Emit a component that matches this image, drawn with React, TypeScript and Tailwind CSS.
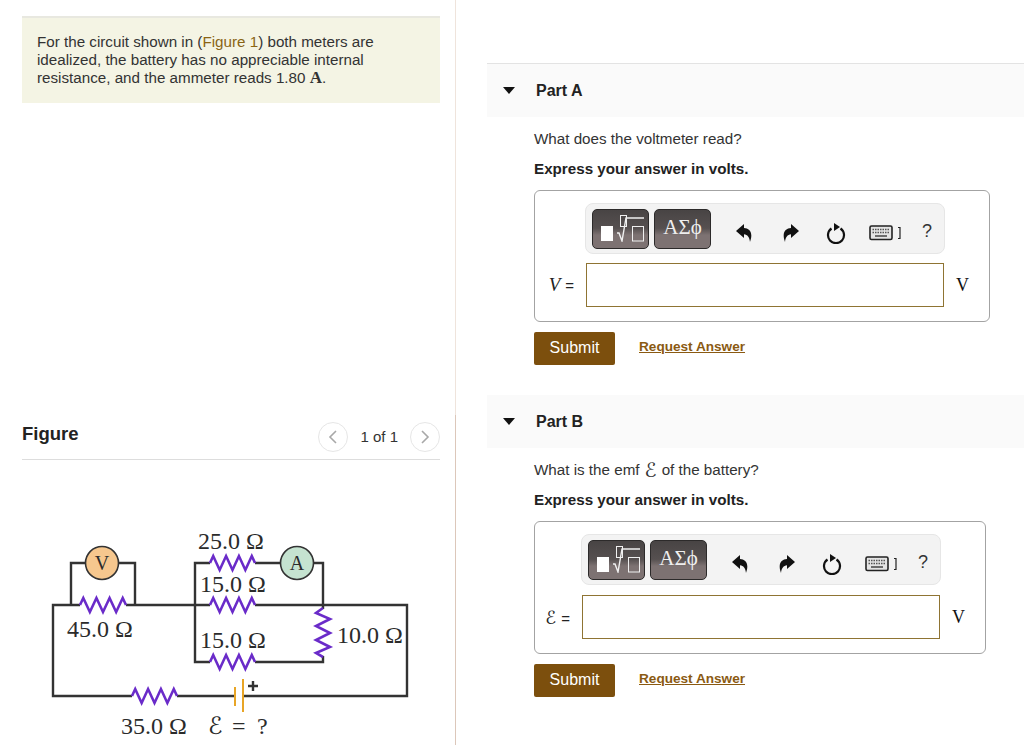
import React from "react";

const sans = "font-['Liberation_Sans',Arial,sans-serif]";
const serif = "font-['Liberation_Serif','Times_New_Roman',serif]";
const script = "font-['DejaVu_Sans',serif]";

// zig-zag between two points along the x axis
function zig(x: number, y: number, w: number) {
  const n = 7;
  const step = w / n;
  let d = `M${x} ${y}`;
  for (let i = 0; i < n; i++) {
    const up = i % 2 === 0 ? -7 : 7;
    d += ` L${x + step * (i + 0.5)} ${y + up}`;
  }
  return d + ` L${x + w} ${y}`;
}

function Circuit() {
  const wire = "#333333";
  const res = "#6a2bc9";
  return (
    <svg width="456" height="235" viewBox="0 510 456 235" className="block">
      <g fill="none" stroke={wire} strokeWidth="2.4">
        <path d="M80 606H53V697H132M177 697H235M243 697H407V606H255M210 606H126" />
        <path d="M71 606V564H85M119 564H135V606" />
        <path d="M210 564H195V663H210M255 663H323V657M323 610V564H314M280 564H255" />
      </g>
      <g fill="none" stroke={res} strokeWidth="2.6">
        <path d={zig(80, 606, 46)} />
        <path d={zig(210, 564, 45)} />
        <path d={zig(210, 606, 45)} />
        <path d={zig(210, 663, 45)} />
        <path d={zig(132, 697, 45)} />
        <path d="M323 609L316 614L330 620L316 627L330 634L316 641L330 648L316 654L323 658" />
      </g>
      <circle cx="102" cy="564" r="16.5" fill="#f6c78e" stroke={wire} strokeWidth="1.6" />
      <circle cx="297" cy="564" r="16.5" fill="#c5e3d0" stroke={wire} strokeWidth="1.6" />
      <g stroke="#e8a526" strokeWidth="2">
        <path d="M235 688V707" />
        <path d="M243 680V713" />
      </g>
      <path d="M253 682V692M248 687H258" stroke={wire} strokeWidth="2.4" />
      <g className={serif} fill="#2b2b2b" fontSize="24">
        <text x="102" y="571" fontSize="20" textAnchor="middle">V</text>
        <text x="297" y="571" fontSize="20" textAnchor="middle">A</text>
        <text x="198" y="550">25.0 Ω</text>
        <text x="200" y="593">15.0 Ω</text>
        <text x="67" y="638">45.0 Ω</text>
        <text x="200" y="649">15.0 Ω</text>
        <text x="337" y="644">10.0 Ω</text>
        <text x="121" y="735">35.0 Ω</text>
        <text x="208" y="735" className={script} fontSize="24" fontStyle="italic">ℰ</text>
        <text x="232" y="735">=</text>
        <text x="257" y="735">?</text>
      </g>
    </svg>
  );
}

function UndoIcon({ flip }: { flip?: boolean }) {
  return (
    <svg width="17" height="18" viewBox="0 0 17 18" className={flip ? "-scale-x-100" : ""}>
      <path d="M0 7L8 0V4C13.5 4.2 17.5 8.5 14 18C13.5 13 11.5 10.5 8 10.2V14Z" fill="#111111" />
    </svg>
  );
}

function KeyboardIcon() {
  return (
    <svg width="33" height="16" viewBox="0 0 33 16">
      <rect x="1" y="1" width="22" height="13.5" rx="1.5" fill="#e4e4e4" stroke="#222222" strokeWidth="1.6" />
      <path d="M3.5 4.5H20.5M3.5 7.5H20.5" stroke="#555555" strokeWidth="1.5" strokeDasharray="1.5 1" />
      <path d="M6 11H18" stroke="#444444" strokeWidth="1.5" />
      <path d="M29 2.5H31V13.5H29" fill="none" stroke="#222222" strokeWidth="1.2" />
    </svg>
  );
}

const btn =
  "flex h-10 w-[57px] rounded-[5px] border border-[#2c2a2a] bg-[linear-gradient(#484444_0%,#565050_48%,#7d7272_66%,#7d7272_100%)]";

function Toolbar() {
  return (
    <div className="flex h-[51px] w-[360px] items-center rounded-lg border border-[#e6e6e6] bg-[#f3f3f3] pl-[6px]">
      <div className={`${btn} items-center gap-[4px] pl-[8px]`}>
        <span className="mt-[9px] h-[15px] w-[12px] bg-white" />
        <svg width="28" height="28" viewBox="0 0 28 28" className="-mt-[2px] shrink-0">
          <path d="M0 19H2L5 27L9 4H27" fill="none" stroke="#f0f0f0" strokeWidth="1.4" />
          <rect x="3.5" y="1.5" width="6" height="11" fill="none" stroke="#f0f0f0" />
          <rect x="15.5" y="12.5" width="11" height="14.5" fill="none" stroke="#f0f0f0" />
        </svg>
      </div>
      <div className={`${btn} ml-[5px] items-start justify-center pt-[7px] ${serif} text-[21px] leading-5 text-[#eeeeee]`}>
        ΑΣϕ
      </div>
      <div className="ml-[25px] mt-2 flex items-center">
        <UndoIcon />
        <div className="ml-[29px]"><UndoIcon flip /></div>
        <svg width="20" height="22" viewBox="0 0 20 22" className="ml-[27px]">
          <path d="M14.5 6.5A8 8 0 1 1 5.5 6.5" fill="none" stroke="#111111" strokeWidth="2.2" />
          <path d="M8 1L14 5L8 9Z" fill="#111111" />
        </svg>
        <div className="ml-[23px]"><KeyboardIcon /></div>
        <span className={`ml-[20px] ${sans} -mt-[3px] text-[18px] leading-5 text-[#333333]`}>?</span>
      </div>
    </div>
  );
}

type PartProps = {
  title: string;
  question: React.ReactNode;
  symbol: React.ReactNode;
  headerClass: string;
  boxClass: string;
  inputGap: string;
  indent: string;
  mt: string;
};

function Part({ title, question, symbol, headerClass, boxClass, inputGap, indent, mt }: PartProps) {
  return (
    <section className={mt}>
      <div className={`flex items-center bg-[#fafafa] ${headerClass}`}>
        <span className="ml-[16px] h-0 w-0 border-x-[6px] border-t-[7px] border-x-transparent border-t-[#111111]" />
        <span className="ml-[21px] text-[16px] font-bold text-[#222222]">{title}</span>
      </div>
      <div className="pl-[47px]">
        <p className="mt-[13px] flex h-[18px] items-center text-[15.2px] text-[#333333]">{question}</p>
        <p className="mt-[12px] h-[18px] text-[15.2px] leading-[18px] font-bold text-[#222222]">Express your answer in volts.</p>
        <div className={`mt-[12px] rounded-md border border-[#a3a3a3] ${boxClass}`}>
          <div className={`pt-[12px] ${indent}`}>
            <Toolbar />
            <div className={`-ml-[50px] flex h-[44px] items-center ${inputGap}`}>
              <span className={`flex w-[51px] items-baseline justify-end pr-[12px] ${serif} text-[19px] text-[#222222]`}>
                {symbol}
                <span className={`ml-[5px] ${sans} text-[15px]`}>=</span>
              </span>
              <div className="h-[44px] w-[358px] border border-[#8f7433]" />
              <span className={`ml-[12px] ${serif} text-[18px] text-[#111111]`}>V</span>
            </div>
          </div>
        </div>
        <div className="mt-[10px] flex items-center">
          <button className="h-[33px] w-[81px] rounded-[2px] bg-[#7c4f0d] pb-[2px] text-[16px] text-white">Submit</button>
          <a className="ml-[24px] -mt-[2px] text-[13.6px] font-bold text-[#8a5a12] underline">Request Answer</a>
        </div>
      </div>
    </section>
  );
}

export default function App() {
  return (
    <div className={`flex h-[745px] w-[1024px] overflow-hidden bg-white ${sans} text-[#333333]`}>
      <div className="h-full w-[456px] shrink-0 border-r [border-image:linear-gradient(#efe4dc_415px,#dcc7ba_415px)_1] pl-[22px]">
        <div className="mt-[16px] h-[87px] w-[418px] border-t-2 border-[#e8e8e0] bg-[#f4f4e4] pl-[15px] pt-[15px] text-[15.2px] leading-[18px]">
          <p>
            For the circuit shown in (<span className="text-[#8a6414]">Figure 1</span>) both meters are
            <br />
            idealized, the battery has no appreciable internal
            <br />
            resistance, and the ammeter reads 1.80 <b className={`${serif} text-[17px]`}>A</b>.
          </p>
        </div>
        <div className="mt-[319px] flex h-[38px] w-[418px] items-start justify-between border-b border-[#dddddd]">
          <h2 className="text-[18.5px] font-bold leading-6 text-[#222222]">Figure</h2>
          <div className="flex items-center gap-[12px] text-[15px]">
            <span className="flex size-[30px] items-center justify-center rounded-full border border-[#e6e6e6]">
              <svg width="10" height="14" viewBox="0 0 10 14"><path d="M8 1L2 7L8 13" fill="none" stroke="#a8a8a8" strokeWidth="1.6" /></svg>
            </span>
            <span>1 of 1</span>
            <span className="flex size-[30px] items-center justify-center rounded-full border border-[#e6e6e6]">
              <svg width="10" height="14" viewBox="0 0 10 14"><path d="M2 1L8 7L2 13" fill="none" stroke="#a8a8a8" strokeWidth="1.6" /></svg>
            </span>
          </div>
        </div>
        <div className="-ml-[22px] mt-[49px]">
          <Circuit />
        </div>
      </div>
      <div className="ml-[31px] flex-1 pt-[63px]">
        <Part
          title="Part A"
          mt=""
          question="What does the voltmeter read?"
          symbol={<i>V</i>}
          headerClass="h-[54px] border-t border-[#e3e3e3]"
          boxClass="h-[132px] w-[456px]"
          inputGap="mt-[9px]"
          indent="pl-[50px]"
        />
        <Part
          title="Part B"
          mt="mt-[30px]"
          question={<>What is the emf<i className={`${script} mx-[5px] text-[20px] leading-none`}>ℰ</i>of the battery?</>}
          symbol={<i className={`${script} text-[18px]`}>ℰ</i>}
          headerClass="h-[53px]"
          boxClass="h-[133px] w-[452px]"
          inputGap="mt-[10px]"
          indent="pl-[46px]"
        />
      </div>
    </div>
  );
}
